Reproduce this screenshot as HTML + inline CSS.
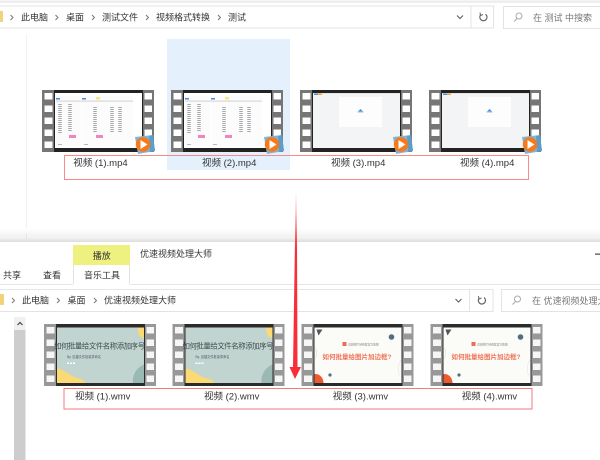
<!DOCTYPE html>
<html><head><meta charset="utf-8"><style>
html,body{margin:0;padding:0;background:#fff;overflow:hidden}
svg{display:block;filter:blur(.3px)}
text{font-family:"Liberation Sans","Noto Sans CJK SC",sans-serif;font-size:9px;fill:#333}
.l{font-size:9.5px;fill:#333}
.g{fill:#777}
</style></head><body>
<svg width="600" height="460" viewBox="0 0 600 460" xmlns="http://www.w3.org/2000/svg">
<defs>
<linearGradient id="arr" x1="0" y1="189" x2="0" y2="250" gradientUnits="userSpaceOnUse"><stop offset="0" stop-color="#fbd0d0"/><stop offset="1" stop-color="#fa2e38"/></linearGradient>
<linearGradient id="band" x1="0" y1="0" x2="0" y2="1"><stop offset="0" stop-color="#fff"/><stop offset=".7" stop-color="#f1f1f1"/><stop offset="1" stop-color="#dcdcdc"/></linearGradient>
<g id="holes"><rect x="2.500" y="3" width="8" height="6.500"/><rect x="2.500" y="15.500" width="8" height="6.500"/><rect x="2.500" y="27.500" width="8" height="6.500"/><rect x="2.500" y="39.500" width="8" height="6.500"/><rect x="2.500" y="51.500" width="8" height="6.500"/><rect x="102.500" y="3" width="7.500" height="6.500"/><rect x="102.500" y="15.500" width="7.500" height="6.500"/><rect x="102.500" y="27.500" width="7.500" height="6.500"/><rect x="102.500" y="39.500" width="7.500" height="6.500"/><rect x="102.500" y="51.500" width="7.500" height="6.500"/></g>
<g id="filmT"><rect x="0" y="0" width="112" height="62" fill="#767676"/><rect x="12" y="0" width="89" height="62" fill="#222"/><use href="#holes" fill="#fff"/></g>
<g id="filmB"><rect x="0" y="0" width="112" height="62" fill="#989898"/><rect x="12" y="0" width="89" height="62" fill="#2b2b2b"/><use href="#holes" fill="#f6f6f6"/></g>
<g id="wmp"><path d="M0 2L18 0L20 16L3 19Z" fill="#7fb5d8"/><path d="M14 1L18 0L20 16L15 17Z" fill="#5f9cc6"/><circle cx="8" cy="9.500" r="7.200" fill="#f47a1c"/><path d="M5.500 5L12.500 9.500L5.500 14Z" fill="#fff"/></g>
<g id="shotA"><rect width="87" height="55" fill="#fff"/>
<rect x="1" y="3" width="25" height="50" fill="#fbfbfb"/><rect x="27" y="3" width="51" height="50" fill="#fcfcfc"/>
<rect x="1" y="5" width="4" height="1.500" fill="#3a8ee0"/><rect x="27" y="5" width="4" height="1.500" fill="#3a8ee0"/><rect x="41" y="4" width="4" height="2.500" fill="#f0ea80"/>
<rect x="1" y="7.500" width="77" height="1.200" fill="#d8d8d8"/>
<path d="M5 11V40M15 11V38M40 14V40M57 14V40M65 14V40" stroke="#a4a8ac" stroke-width="3.500" stroke-dasharray="1 1" fill="none"/>
<rect x="14" y="42" width="7" height="3" fill="#f084c0"/><rect x="41" y="42" width="7" height="3" fill="#f084c0"/><rect x="3" y="51" width="4" height="1" fill="#bbb"/><rect x="29" y="51" width="4" height="1" fill="#bbb"/></g>
<g id="shotB"><rect width="87" height="55" fill="#f3f4f5"/><rect x="0" y="0" width="87" height="1" fill="#e4e4e4"/><rect x="1" y="0.500" width="4" height="1.500" fill="#4a90d9"/><rect x="5" y="0.500" width="4" height="1.500" fill="#f0a830"/>
<rect x="26" y="4" width="43" height="30" fill="#fdfdfd"/><path d="M45 18.500L47.500 16L50 18.500Z" fill="#3e8fe0"/><rect x="44.500" y="18.500" width="6" height="1.200" fill="#bcd"/></g>
<g id="slideA"><svg width="87" height="55.500" viewBox="0 0 87 55.500"><rect width="87" height="55.500" fill="#c1d4d0"/><path d="M0 41C7 41 13 50 26 52C27 53 28 55 29 55.500H0Z" fill="#fbd974"/><path d="M87 0H81C80 4 82 10 87 11Z" fill="#fbd974"/><path d="M87 55.500V37C80 40 75 47 76 55.500Z" fill="#9ab9b2"/>
<text x="-3" y="21" style="font-size:7.400px;fill:#3f4c4c" textLength="91" lengthAdjust="spacing">如何批量给文件名称添加序号</text>
<text x="10" y="30.500" style="font-size:3.200px;fill:#556">By. 迅捷文件批量重命名</text><rect x="10" y="35" width="2" height="1.500" fill="#fff"/><rect x="13" y="35" width="2" height="1.500" fill="#fff"/><rect x="16" y="35" width="2" height="1.500" fill="#fff"/></svg></g>
<g id="slideB"><svg width="87" height="55.500" viewBox="0 0 87 55.500"><rect width="87" height="55.500" fill="#fbfbf7"/><path d="M2 2L8 2L4 8Z" fill="#555"/><circle cx="77" cy="9.500" r="2.800" fill="#4f6f80"/><circle cx="15.500" cy="47.500" r="1.600" fill="#4f6f80"/><path d="M0 46.500C5 46 9 50 9 55.500H0Z" fill="#ee5a30"/><path d="M1 20Q3 25 1 31" stroke="#ddd" fill="none" stroke-width=".6"/><path d="M87 32Q82 38 85 48" stroke="#e6e6e6" fill="none" stroke-width=".6"/>
<rect x="28" y="14.500" width="4" height="4" fill="#ee6a60"/><text x="33.500" y="17.800" style="font-size:2.800px;fill:#888">迅捷图片转换器官方教程</text>
<text x="8" y="31.500" style="font-size:6.500px;font-weight:bold;fill:#f0755a" textLength="69" lengthAdjust="spacing">如何批量给图片加边框?</text></svg></g>
<path id="chev" d="M0 0L2.500 2.500L0 5" fill="none" stroke="#777" stroke-width="1"/>
</defs>

<!-- top window -->
<rect x="0" y="0" width="600" height="240" fill="#fff"/>
<rect x="0" y="0" width="600" height="1.500" fill="#f4f4f4"/>
<rect x="0" y="1.500" width="600" height="1.200" fill="#e6e6e6"/>
<rect x="-2" y="6" width="495.500" height="22" fill="#fff" stroke="#e3e3e3"/>
<rect x="503.500" y="6.500" width="97" height="22" fill="#fff" stroke="#e3e3e3"/>
<rect x="470.500" y="6" width="1" height="22" fill="#e3e3e3"/>
<rect x="0" y="11" width="3" height="11" fill="#f2d27a"/>
<use href="#chev" x="10.500" y="15"/><use href="#chev" x="55.500" y="15"/><use href="#chev" x="92" y="15"/><use href="#chev" x="146" y="15"/><use href="#chev" x="218" y="15"/>
<text x="21" y="20.500">此电脑</text><text x="66" y="20.500">桌面</text><text x="102" y="20.500">测试文件</text><text x="156" y="20.500">视频格式转换</text><text x="228" y="20.500">测试</text>
<path d="M457 15.500L460 18.500L463 15.500" fill="none" stroke="#666" stroke-width="1.200"/>
<path d="M485.500 14.200A3.600 3.600 0 1 1 480.500 15" fill="none" stroke="#666" stroke-width="1.200"/><path d="M480 12.500L480.500 15.500L483 14.500" fill="none" stroke="#666" stroke-width="1"/>
<circle cx="519" cy="16" r="3" fill="none" stroke="#aaa"/><path d="M517 18.500L514 21.500" stroke="#aaa"/>
<text class="g" x="533" y="21">在 测试 中搜索</text>
<rect x="26" y="34" width="1" height="206" fill="#f2f2f2"/>
<rect x="167" y="39" width="123" height="131" fill="#e4f1fd"/>

<g transform="translate(42,90)"><use href="#filmT"/><use href="#shotA" x="13" y="3"/><use href="#wmp" x="93" y="45"/></g>
<g transform="translate(171,90)"><use href="#filmT"/><use href="#shotA" x="13" y="3"/><use href="#wmp" x="93" y="45"/></g>
<g transform="translate(300,90)"><use href="#filmT"/><use href="#shotB" x="13" y="3"/><use href="#wmp" x="93" y="45"/></g>
<g transform="translate(429,90)"><use href="#filmT"/><use href="#shotB" x="13" y="3"/><use href="#wmp" x="93" y="45"/></g>
<text class="l" x="73.300" y="166">视频 (1).mp4</text><text class="l" x="202" y="166">视频 (2).mp4</text><text class="l" x="331" y="166">视频 (3).mp4</text><text class="l" x="460" y="166">视频 (4).mp4</text>
<rect x="64.500" y="155.500" width="464" height="24" fill="none" stroke="#f98a8a"/>

<!-- bottom window -->
<rect x="0" y="235" width="600" height="225" fill="#fff"/>
<rect x="0" y="228" width="600" height="14" fill="url(#band)"/>
<rect x="26" y="233" width="1" height="8" fill="#e6e6e6"/>
<rect x="73" y="245" width="57" height="20" fill="#eef080"/>
<rect x="73" y="265" width="1" height="19" fill="#e2e2e2"/><rect x="129" y="265" width="1" height="19" fill="#e2e2e2"/>
<text x="92.700" y="259">播放</text><text x="140" y="257">优速视频处理大师</text>
<text x="3" y="278.500">共享</text><text x="43" y="278.500">查看</text><text x="84" y="278.500">音乐工具</text>
<rect x="0" y="284" width="73" height="1" fill="#e6e6e6"/><rect x="130" y="284" width="470" height="1" fill="#e6e6e6"/>
<rect x="0" y="289" width="493" height="1" fill="#e6e6e6"/><rect x="0" y="311" width="493" height="1" fill="#e3e3e3"/>
<rect x="469" y="289" width="1" height="23" fill="#e3e3e3"/><rect x="492.500" y="289" width="1" height="23" fill="#e3e3e3"/>
<rect x="501.500" y="289.500" width="100" height="22" fill="#fff" stroke="#e3e3e3"/>
<rect x="0" y="294" width="4" height="11" fill="#f2d27a"/>
<use href="#chev" x="12" y="298"/><use href="#chev" x="57" y="298"/><use href="#chev" x="94" y="298"/>
<text x="22" y="303.500">此电脑</text><text x="67.500" y="303.500">桌面</text><text x="104" y="303.500">优速视频处理大师</text>
<path d="M455.500 299L458.500 302L461.500 299" fill="none" stroke="#666" stroke-width="1.200"/>
<path d="M484 297.500A3.600 3.600 0 1 1 479 298.300" fill="none" stroke="#666" stroke-width="1.200"/><path d="M478.500 296L479 299L481.500 298" fill="none" stroke="#666"/>
<circle cx="517.500" cy="299" r="3" fill="none" stroke="#aaa"/><path d="M515.500 301.500L512.500 304.500" stroke="#aaa"/>
<text class="g" x="532" y="304">在 优速视频处理大师</text>
<rect x="595" y="253.500" width="5" height="1.200" fill="#444"/>

<rect x="14" y="317" width="11.500" height="143" fill="#cdcdcd"/><rect x="14" y="317" width="11.500" height="13" fill="#f0f0f0"/>
<path d="M17.500 325L20 322.500L22.500 325" fill="none" stroke="#444" stroke-width="1.200"/>

<g transform="translate(44,324)"><use href="#filmB"/><use href="#slideA" x="13" y="3.500"/></g>
<g transform="translate(172.500,324)"><use href="#filmB"/><use href="#slideA" x="13" y="3.500"/></g>
<g transform="translate(301.500,324)"><use href="#filmB"/><use href="#slideB" x="13" y="3.500"/></g>
<g transform="translate(430.500,324)"><use href="#filmB"/><use href="#slideB" x="13" y="3.500"/></g>
<text class="l" x="75" y="399.500">视频 (1).wmv</text><text class="l" x="204" y="399.500">视频 (2).wmv</text><text class="l" x="332.700" y="399.500">视频 (3).wmv</text><text class="l" x="461.700" y="399.500">视频 (4).wmv</text>
<rect x="64" y="388.500" width="468" height="20.500" fill="none" stroke="#f57a7a"/>

<!-- arrow -->
<path d="M296 189L297 240L297.500 367H301L295 379L289.500 367H293L295 240Z" fill="url(#arr)"/>
</svg>
</body></html>
